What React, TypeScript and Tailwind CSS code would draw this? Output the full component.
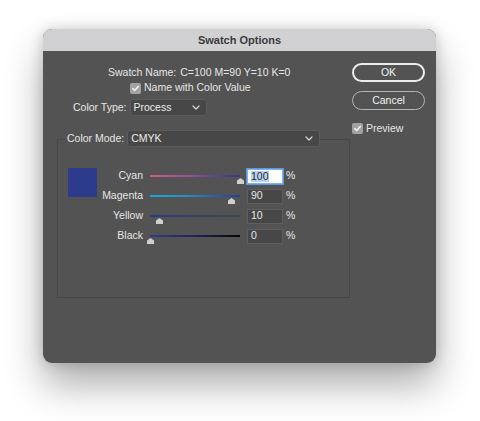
import type { ReactNode } from "react";

const FONT = { fontFamily: "'Liberation Sans', Arial, sans-serif" };

type Ink = {
  label: string;
  value: number;
  gradient: string;
  focused?: boolean;
};

const INKS: Ink[] = [
  { label: "Cyan", value: 100, gradient: "bg-[linear-gradient(90deg,#dc5682,#8d4c9c_50%,#2e3b8d)]", focused: true },
  { label: "Magenta", value: 90, gradient: "bg-[linear-gradient(90deg,#12abd4,#2590c4_40%,#2c3c94)]" },
  { label: "Yellow", value: 10, gradient: "bg-[linear-gradient(90deg,#2c3a86,#37435f_60%,#3d4649)]" },
  { label: "Black", value: 0, gradient: "bg-[linear-gradient(90deg,#2e3b8e,#1b2356_55%,#050508)]" },
];

function clsx(...parts: (string | false | undefined)[]) {
  return parts.filter(Boolean).join(" ");
}

function Check() {
  return (
    <span className="flex h-[11px] w-[11px] items-center justify-center rounded-[2px] bg-[#a2a2a2]">
      <svg width="9" height="9" viewBox="0 0 9 9" fill="none">
        <path d="M1.8 4.6 3.7 6.5 7.3 2.4" stroke="#f4f4f4" strokeWidth="1.5" strokeLinecap="round" strokeLinejoin="round" />
      </svg>
    </span>
  );
}

function Chevron() {
  return (
    <svg width="8" height="5" viewBox="0 0 8 5" fill="none">
      <path d="M1 1 4 4 7 1" stroke="#d8d8d8" strokeWidth="1.2" strokeLinecap="round" strokeLinejoin="round" />
    </svg>
  );
}

function Select({ value, width }: { value: string; width: string }) {
  return (
    <div className={`flex h-[17px] items-center justify-between rounded-[3px] border border-[#5b5b5b] bg-[#474747] pl-[3px] pr-[6px] text-[10.5px] text-[#ececec] ${width}`}>
      <span>{value}</span>
      <Chevron />
    </div>
  );
}

function Button({ primary, children }: { primary?: boolean; children: ReactNode }) {
  return (
    <div
      className={clsx(
        "flex h-[19px] w-[73px] items-center justify-center rounded-full text-[10.5px] text-[#f2f2f2]",
        primary ? "border-2 border-[#ececec]" : "border border-[#b4b4b4]"
      )}
    >
      {children}
    </div>
  );
}

function InkRow({ ink }: { ink: Ink }) {
  return (
    <div className="flex h-[20px] items-center">
      <span className="w-[46px] text-right text-[10.5px] text-[#e6e6e6]">{ink.label}</span>
      {/* track with the thumb hanging below it */}
      <div className="relative ml-[7px] h-[2px] w-[90px]">
        <div className={`h-full w-full ${ink.gradient}`} />
        <svg
          className="absolute top-[3px]"
          style={{ left: ink.value * 0.9 - 3.5 }}
          width="7"
          height="6"
          viewBox="0 0 7 6"
        >
          <path d="M3.5 0 7 2.6V6H0V2.6Z" fill="#cfcfcf" />
        </svg>
      </div>
      <div
        className={clsx(
          "ml-[7px] flex h-[15px] w-[36px] items-center pl-[3px] text-[10.5px]",
          ink.focused
            ? "border border-[#7fb0ee] bg-white text-[#2a2a2a] shadow-[0_0_0_1px_#5f97dd]"
            : "border border-[#5e5e5e] bg-[#474747] text-[#e8e8e8]"
        )}
      >
        <span className={ink.focused ? "bg-[#b6d3f4] leading-[11px]" : ""}>{ink.value}</span>
      </div>
      <span className="ml-[3px] text-[10.5px] text-[#e6e6e6]">%</span>
    </div>
  );
}

export default function App() {
  return (
    <div className="min-h-screen bg-white pl-[43px] pt-[29px]" style={FONT}>
      <div className="h-[334px] w-[393px] overflow-hidden rounded-[9px] bg-[#535353] shadow-[0_22px_38px_rgba(0,0,0,0.32),0_0_14px_rgba(0,0,0,0.18)]">
        {/* title bar */}
        <div className="flex h-[22px] items-center justify-center bg-[#d1d1d4] text-[11px] font-bold text-[#3b3b3b]">
          Swatch Options
        </div>

        <div className="flex">
          {/* settings column */}
          <div className="w-[309px]">
            <div className="ml-[65px] mt-[16px] flex h-[12px] items-center gap-[4px] text-[10.5px] text-[#e6e6e6]">
              <span>Swatch Name:</span>
              <span>C=100 M=90 Y=10 K=0</span>
            </div>

            <div className="ml-[87px] mt-[3px] flex h-[12px] items-center gap-[3px] text-[10.5px] text-[#e6e6e6]">
              <Check />
              <span>Name with Color Value</span>
            </div>

            <div className="ml-[30px] mt-[5px] flex items-center gap-[3px] text-[10.5px] text-[#e6e6e6]">
              <span>Color Type:</span>
              <Select value="Process" width="w-[77px]" />
            </div>

            {/* color mode group */}
            <div className="ml-[14px] mt-[23px] h-[159px] w-[293px] border border-[#474747]">
              <div className="-mt-[10px] flex items-center">
                <span className="ml-[7px] bg-[#535353] pl-[2px] pr-[3px] text-[10.5px] text-[#e6e6e6]">Color Mode:</span>
                <Select value="CMYK" width="w-[193px]" />
              </div>

              <div className="ml-[10px] mt-[19px] flex items-start">
                <div className="mt-[2px] h-[29px] w-[29px] bg-[#2d3b8c]" />
                <div className="flex flex-col">
                  {INKS.map((ink) => (
                    <InkRow key={ink.label} ink={ink} />
                  ))}
                </div>
              </div>
            </div>
          </div>

          {/* buttons column */}
          <div className="flex flex-col pt-[12px]">
            <Button primary>OK</Button>
            <div className="mt-[9px]">
              <Button>Cancel</Button>
            </div>
            <div className="mt-[11px] flex items-center gap-[3px] text-[10.5px] text-[#e6e6e6]">
              <Check />
              <span>Preview</span>
            </div>
          </div>
        </div>
      </div>
    </div>
  );
}
